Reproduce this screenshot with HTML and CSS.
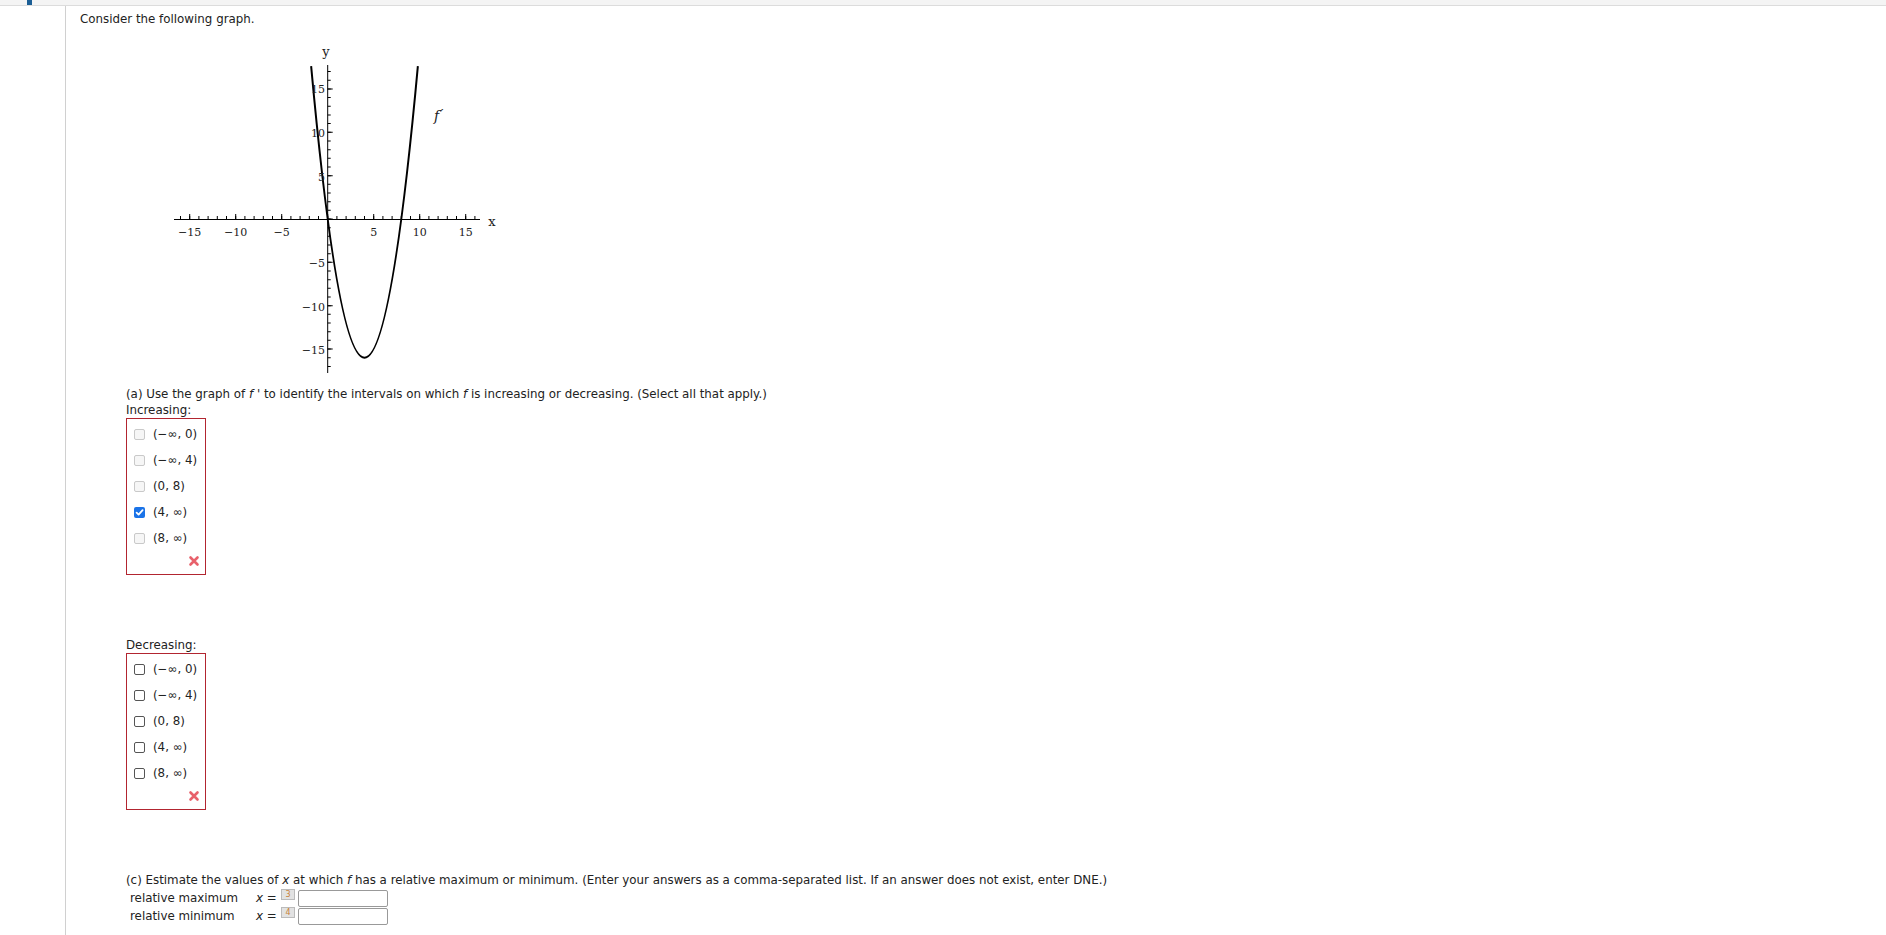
FILE: index.html
```html
<!DOCTYPE html>
<html lang="en">
<head>
<meta charset="utf-8">
<title>Consider the following graph</title>
<link rel="stylesheet" href="styles.css">
</head>
<body>
<div class="topbar"><span class="marker"></span></div>
<div class="main">
  <p class="intro">Consider the following graph.</p>
  <svg class="graph" width="350" height="340" viewBox="160 40 350 340" xmlns="http://www.w3.org/2000/svg">
    <g stroke="#000" fill="none">
      <line x1="174" y1="219.5" x2="480" y2="219.5" stroke-width="1"/>
      <line x1="327.7" y1="65" x2="327.7" y2="373" stroke-width="1"/>
      <line x1="180" y1="217.5" x2="476" y2="217.5" stroke-width="3" stroke-dasharray="1 8.2"/>
      <line x1="189.2" y1="216.5" x2="467" y2="216.5" stroke-width="5" stroke-dasharray="1 45"/>
      <line x1="329.2" y1="71.1" x2="329.2" y2="368" stroke-width="3" stroke-dasharray="1 7.67"/>
      <line x1="330.2" y1="88.45" x2="330.2" y2="352" stroke-width="5" stroke-dasharray="1 42.35"/>
      <path d="M311.14 66.06 Q364.5 649.38 417.86 66.06" stroke-width="2"/>
    </g>
    <g class="ticklbl" text-anchor="middle">
      <text x="189.7" y="236">−15</text>
      <text x="235.7" y="236">−10</text>
      <text x="281.7" y="236">−5</text>
      <text x="373.7" y="236">5</text>
      <text x="419.7" y="236">10</text>
      <text x="465.7" y="236">15</text>
    </g>
    <g class="ticklbl" text-anchor="end">
      <text x="325" y="93">15</text>
      <text x="325" y="137">10</text>
      <text x="325" y="181">5</text>
      <text x="325" y="267">−5</text>
      <text x="325" y="311">−10</text>
      <text x="325" y="354">−15</text>
    </g>
    <text class="axlbl" x="326" y="56" text-anchor="middle">y</text>
    <text class="axlbl" x="492" y="226" text-anchor="middle">x</text>
    <text class="fname" x="434" y="121">f<tspan dx="1" dy="-1">′</tspan></text>
  </svg>

  <div class="part">
    <p class="q">(a) Use the graph of <i>f</i> ' to identify the intervals on which <i>f</i> is increasing or decreasing. (Select all that apply.)</p>
    <p class="label">Increasing:</p>
    <div class="choices">
      <div class="opt"><span class="cb dis"></span><span>(−∞, 0)</span></div>
      <div class="opt"><span class="cb dis"></span><span>(−∞, 4)</span></div>
      <div class="opt"><span class="cb dis"></span><span>(0, 8)</span></div>
      <div class="opt"><span class="cb on"><svg width="11" height="11" viewBox="0 0 11 11"><path d="M2.6 5.6 L4.6 7.6 L8.6 3.2" stroke="#fff" stroke-width="1.8" fill="none" stroke-linecap="round" stroke-linejoin="round"/></svg></span><span>(4, ∞)</span></div>
      <div class="opt"><span class="cb dis"></span><span>(8, ∞)</span></div>
      <div class="mark"><svg width="12" height="12" viewBox="0 0 12 12"><path d="M2.5 2.5 L9.5 9.5 M9.5 2.5 L2.5 9.5" stroke="#e8616b" stroke-width="2.6" stroke-linecap="round"/></svg></div>
    </div>

    <p class="label dec">Decreasing:</p>
    <div class="choices">
      <div class="opt"><span class="cb"></span><span>(−∞, 0)</span></div>
      <div class="opt"><span class="cb"></span><span>(−∞, 4)</span></div>
      <div class="opt"><span class="cb"></span><span>(0, 8)</span></div>
      <div class="opt"><span class="cb"></span><span>(4, ∞)</span></div>
      <div class="opt"><span class="cb"></span><span>(8, ∞)</span></div>
      <div class="mark"><svg width="12" height="12" viewBox="0 0 12 12"><path d="M2.5 2.5 L9.5 9.5 M9.5 2.5 L2.5 9.5" stroke="#e8616b" stroke-width="2.6" stroke-linecap="round"/></svg></div>
    </div>

    <p class="q qc">(c) Estimate the values of <i>x</i> at which <i>f</i> has a relative maximum or minimum. (Enter your answers as a comma-separated list. If an answer does not exist, enter DNE.)</p>
    <div class="answers">
      <div class="arow"><span class="aname">relative maximum</span><span class="eq"><i>x</i> =</span><span class="badge">3</span><span class="inp"></span></div>
      <div class="arow"><span class="aname">relative minimum</span><span class="eq"><i>x</i> =</span><span class="badge">4</span><span class="inp"></span></div>
    </div>
  </div>
</div>
</body>
</html>
```
FILE: styles.css
```css
html, body {
  margin: 0;
  padding: 0;
  background: #fff;
}
body {
  font-family: "DejaVu Sans", Verdana, sans-serif;
  font-size: 11.85px;
  color: #222;
}
p { margin: 0; }

.topbar {
  height: 5px;
  background: #f4f4f4;
  border-bottom: 1px solid #dcdcdc;
  display: flex;
}
.marker {
  display: block;
  width: 5px;
  height: 5px;
  margin-left: 27px;
  background: #1b5e95;
}

.main {
  margin-left: 65px;
  border-left: 1px solid #d0d0d0;
  padding-left: 14px;
  min-height: calc(100vh - 6px);
  box-sizing: border-box;
  overflow: hidden;
}
.intro {
  margin-top: 6px;
  line-height: 14px;
}
.graph {
  display: block;
  margin-top: 14px;
  margin-left: 80px;
}
.ticklbl {
  font-family: "DejaVu Serif", "Liberation Serif", serif;
  font-size: 11px;
  fill: #222;
}
.axlbl {
  font-family: "DejaVu Serif", "Liberation Serif", serif;
  font-size: 13px;
  fill: #222;
}
.fname {
  font-family: "DejaVu Serif", "Liberation Serif", serif;
  font-style: italic;
  font-size: 14px;
  fill: #222;
}

.part {
  margin-left: 46px;
}
.q {
  margin-top: 6px;
  line-height: 16px;
}
.label {
  line-height: 16px;
}
.label.dec {
  margin-top: 62px;
}
.choices {
  width: 78px;
  border: 1px solid #b22530;
  padding: 2px 0 3px 0;
}
.opt {
  height: 26px;
  display: flex;
  align-items: center;
  padding-left: 7px;
  gap: 8px;
}
.cb {
  width: 9px;
  height: 9px;
  border: 1px solid #555;
  border-radius: 2px;
  background: #fff;
  display: flex;
  align-items: center;
  justify-content: center;
}
.cb.dis {
  border-color: #c9c9c9;
  background: #f6f6f6;
}
.cb.on {
  width: 11px;
  height: 11px;
  border: none;
  background: #1a73e8;
}
.cb.on svg { display: block; }
.mark {
  height: 20px;
  display: flex;
  align-items: center;
  justify-content: flex-end;
  padding-right: 5px;
}
.mark svg { display: block; }

.qc {
  margin-top: 62px;
  line-height: 17px;
}
.answers {
  padding-left: 4px;
}
.arow {
  display: flex;
  align-items: center;
  height: 18px;
}
.aname {
  width: 126px;
}
.eq {
  width: 25px;
}
.badge {
  width: 12px;
  height: 9px;
  border: 1px solid #bbb;
  background: #e2e2e2;
  color: #c8823a;
  font-size: 8px;
  line-height: 9px;
  text-align: center;
  margin-right: 3px;
  align-self: flex-start;
}
.inp {
  width: 88px;
  height: 15px;
  border: 1px solid #999;
  border-radius: 2px;
  background: #fff;
}
```
